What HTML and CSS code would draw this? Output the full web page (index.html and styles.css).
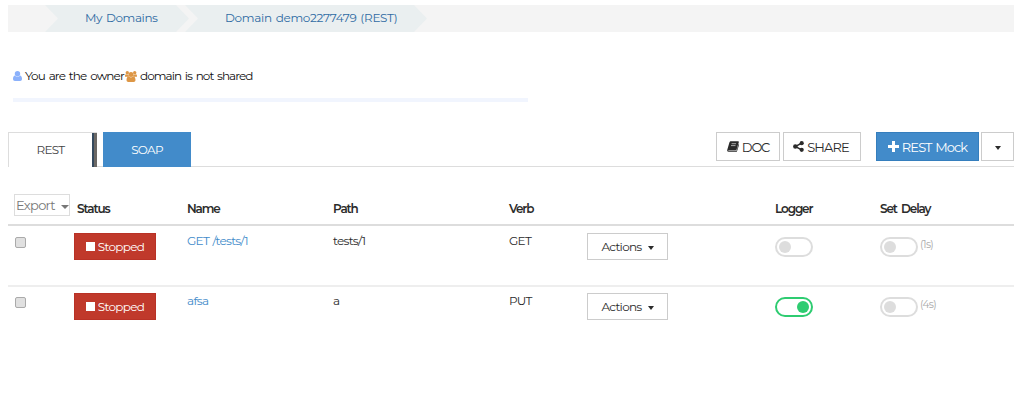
FILE: index.html
```html
<!DOCTYPE html>
<html lang="en">
<head>
  <meta charset="UTF-8">
  <title>Domain demo2277479 (REST)</title>
  <link rel="stylesheet" href="styles.css">
</head>
<body>
  <nav class="breadcrumb">
    <a class="crumb crumb-home">My Domains</a>
    <a class="crumb crumb-current">Domain demo2277479 (REST)</a>
  </nav>

  <p class="owner">
    <svg class="icon-user" viewBox="0 0 9 10"><circle cx="4.5" cy="2.7" r="2.7"/><path d="M1.800 4.600C.6 4.800 0 6.300 0 8c0 1.200.8 2 1.900 2h5.200C8.200 10 9 9.200 9 8c0-1.700-.6-3.200-1.800-3.400a3.600 3.600 0 0 1-5.400 0z"/></svg>
    <span class="owner-text">You are the owner</span>
    <svg class="icon-group" viewBox="0 0 12 11"><circle cx="2.300" cy="1.700" r="1.700"/><circle cx="9.700" cy="1.700" r="1.700"/><circle cx="6" cy="3.500" r="2.500"/><path d="M.8 3.200C0 3.500 0 4.700 0 5.800h3.200L4 4zM11.200 3.200c.8.3.8 1.500.8 2.600H8.800L8 4zM3.700 5.300C2.200 5.500 1.500 7.500 1.500 9c0 1.200.7 2 1.800 2h5.400c1.100 0 1.800-.8 1.800-2 0-1.500-.7-3.500-2.200-3.700a3.300 3.300 0 0 1-4.600 0z"/></svg>
    <span>domain is not shared</span>
  </p>
  <div class="divider"></div>

  <div class="toolbar">
    <a class="tab tab-active">REST</a>
    <a class="tab tab-soap">SOAP</a>
    <div class="buttons">
      <button class="btn btn-doc">
        <svg class="icon-book" viewBox="0 0 12 11"><path d="M4 .3h7.200c.6 0 .8.4.6 1L9.600 8.500c-.2.600-.6.900-1.200.9H2c-.5 0-.8.200-.7.5.100.3.400.4.8.4h6.500c.5 0 .9-.3 1-.8l2.100-6.700c.4.300.4.700.3 1.100l-1.900 6c-.2.700-.8 1.100-1.500 1.100H2C.8 11 0 10 .2 8.900L2.400 1.600C2.700.8 3.200.3 4 .3z"/><path class="page-lines" d="M4.600 2.700h4.500M4 4.600h4.500"/></svg>
        <span>DOC</span>
      </button>
      <button class="btn btn-share">
        <svg class="icon-share" viewBox="0 0 11 11"><path class="share-lines" d="M8.700 2.200L2.300 5.500l6.400 3.300"/><circle cx="8.700" cy="2.200" r="2.100"/><circle cx="2.300" cy="5.500" r="2.200"/><circle cx="8.700" cy="8.800" r="2.100"/></svg>
        <span>SHARE</span>
      </button>
      <button class="btn btn-mock">
        <svg class="icon-plus" viewBox="0 0 11 11"><path d="M4 0h3v4h4v3H7v4H4V7H0V4h4z"/></svg>
        <span>REST Mock</span>
      </button>
      <button class="btn btn-more"><i class="caret"></i></button>
    </div>
  </div>

  <table class="services">
    <colgroup>
      <col class="col-check"><col class="col-status"><col class="col-name"><col class="col-path">
      <col class="col-verb"><col class="col-actions"><col class="col-logger"><col class="col-delay">
    </colgroup>
    <thead>
      <tr>
        <th><button class="export"><span>Export</span><i class="caret"></i></button></th>
        <th class="status-head">Status</th>
        <th>Name</th>
        <th>Path</th>
        <th>Verb</th>
        <th></th>
        <th>Logger</th>
        <th>Set Delay</th>
      </tr>
    </thead>
    <tbody>
      <tr>
        <td><span class="check"></span></td>
        <td><button class="stopped"><i class="square"></i><span>Stopped</span></button></td>
        <td><a class="link">GET /tests/1</a></td>
        <td>tests/1</td>
        <td>GET</td>
        <td><button class="btn actions"><span>Actions</span><i class="caret"></i></button></td>
        <td><span class="switch"></span></td>
        <td><div class="delay"><span class="switch"></span><span class="secs">(1s)</span></div></td>
      </tr>
      <tr>
        <td><span class="check"></span></td>
        <td><button class="stopped"><i class="square"></i><span>Stopped</span></button></td>
        <td><a class="link">afsa</a></td>
        <td>a</td>
        <td>PUT</td>
        <td><button class="btn actions"><span>Actions</span><i class="caret"></i></button></td>
        <td><span class="switch on"></span></td>
        <td><div class="delay"><span class="switch"></span><span class="secs">(4s)</span></div></td>
      </tr>
    </tbody>
  </table>
</body>
</html>
```

FILE: styles.css
```css
* {
  box-sizing: border-box;
}

body {
  margin: 0;
  padding: 5px 10px 0 8px;
  background: #fff;
  color: #2b2b2b;
  font: 12px/16px Montserrat, Inter, sans-serif;
  letter-spacing: -.7px;
  word-spacing: 1px;
}

span, a {
  white-space: nowrap;
}

svg {
  display: block;
  flex: none;
  fill: currentColor;
}

button {
  font: inherit;
  letter-spacing: inherit;
  word-spacing: inherit;
  color: inherit;
  margin: 0;
  padding: 0;
}

/* breadcrumb */
.breadcrumb {
  display: flex;
  height: 27px;
  padding-left: 37px;
  background: #f4f4f4;
  letter-spacing: -.3px;
}

.crumb {
  height: 27px;
  padding-left: 40px;
  line-height: 26px;
  background: #eaeff0;
  color: #2f6ba3;
  clip-path: polygon(0 0, calc(100% - 13px) 0, 100% 50%, calc(100% - 13px) 100%, 0 100%, 13px 50%);
}

.crumb-home {
  width: 144px;
  letter-spacing: -.4px;
}

.crumb-current {
  width: 242px;
  margin-left: -4px;
}

/* owner line */
.owner {
  display: flex;
  align-items: center;
  height: 16px;
  margin: 36px 0 0;
  padding-left: 5px;
  color: #111;
  letter-spacing: -.95px;
  word-spacing: 1.5px;
}

.icon-user {
  width: 9px;
  height: 10px;
  margin-right: 3px;
  color: #8bb1fb;
}

.icon-group {
  width: 12px;
  height: 11px;
  margin: 0 3px 0 2px;
  color: #dd9746;
}

.owner-text {
  width: 98px;
  letter-spacing: -.87px;
}

.divider {
  width: 515px;
  height: 4px;
  margin: 14px 0 0 5px;
  background: #f1f5fe;
}

/* tabs and buttons */
.toolbar {
  display: flex;
  height: 35px;
  margin-top: 30px;
  border-bottom: 1px solid #ddd;
}

.tab {
  height: 35px;
  line-height: 35px;
  text-align: center;
}

.tab-active {
  width: 89px;
  border: solid #ddd;
  border-width: 1px 0 0 1px;
  background: linear-gradient(to left, #6b6865 3px, #34495e 3px, #34495e 5px, #fff 5px);
  padding-right: 5px;
  line-height: 34px;
  color: #444;
}

.tab-soap {
  width: 88px;
  margin-left: 6px;
  background: #428bca;
  color: #fff;
}

.buttons {
  display: flex;
  margin-left: auto;
  font-size: 13px;
}

.btn {
  display: flex;
  align-items: center;
  justify-content: center;
  height: 29px;
  border: 1px solid #ccc;
  background: #fff;
}

.btn svg {
  margin-right: 3px;
}

.btn-doc {
  width: 64px;
  letter-spacing: -1.200px;
}

.btn-share {
  width: 78px;
  margin-left: 3px;
  padding-right: 2px;
  letter-spacing: -.9px;
}

.btn-mock {
  width: 103px;
  margin-left: 15px;
  border-color: #357ebd;
  background: #428bca;
  color: #fff;
  letter-spacing: -.9px;
}

.btn-more {
  width: 33px;
  margin-left: 2px;
}

.icon-book {
  width: 12px;
  height: 11px;
}

.icon-share, .icon-plus {
  width: 11px;
  height: 11px;
}

.page-lines {
  stroke: #fff;
  stroke-width: .6;
}

.share-lines {
  fill: none;
  stroke: currentColor;
  stroke-width: 1.5;
}

.caret {
  border: solid transparent;
  border-width: 4px 4px 0;
  border-top-color: currentColor;
}

.btn-more .caret {
  margin-top: 3px;
  border-width: 4px 3.500px 0;
}

/* services table */
.services {
  width: 1006px;
  margin-top: 21px;
  table-layout: fixed;
  border-collapse: separate;
  border-spacing: 0;
}

.col-check { width: 66px; }
.col-status { width: 113px; }
.col-name { width: 146px; }
.col-path { width: 176px; }
.col-verb { width: 78px; }
.col-actions { width: 188px; }
.col-logger { width: 105px; }
.col-delay { width: 134px; }

th {
  height: 38px;
  padding: 0 0 7px;
  border-bottom: 2px solid #ddd;
  text-align: left;
  vertical-align: bottom;
  font-weight: 600;
  letter-spacing: -1.100px;
  word-spacing: 2px;
}

.status-head {
  padding-left: 3px;
}

.export {
  display: flex;
  align-items: center;
  width: 56px;
  height: 22px;
  margin: 0 0 1px 6px;
  padding: 0 1px;
  border: 1px solid #ddd;
  background: #fff;
  color: #777;
  font-size: 13px;
  font-weight: 400;
  letter-spacing: -.7px;
}

.export .caret {
  margin: 3px 0 0 6px;
}

td {
  height: 59px;
  padding: 7px 0 0;
  vertical-align: top;
}

tr + tr td {
  padding-top: 6px;
  border-top: 2px solid #eee;
}

.check {
  display: block;
  width: 11px;
  height: 11px;
  margin: 4px 0 0 7px;
  border: 1px solid #aaa;
  border-radius: 2px;
  background: #e0e0e0;
}

.stopped {
  display: flex;
  align-items: center;
  justify-content: center;
  width: 82px;
  height: 27px;
  border: 1px solid #b93226;
  background: #c0392b;
  color: #fff;
}

.square {
  width: 9px;
  height: 9px;
  margin-right: 3px;
  background: #fff;
}

.link {
  color: #428bca;
}

.actions {
  width: 81px;
  height: 27px;
}

.actions .caret {
  margin: 2px 0 0 6px;
  border-width: 4px 3.500px 0;
}

.switch {
  display: block;
  width: 38px;
  height: 20px;
  margin-top: 4px;
  padding: 2px;
  border: 2px solid #ddd;
  border-radius: 10px;
}

.switch::before {
  content: "";
  display: block;
  width: 12px;
  height: 12px;
  border-radius: 50%;
  background: #ddd;
}

.switch.on {
  border-color: #2ecc71;
}

.switch.on::before {
  margin-left: auto;
  background: #2ecc71;
}

.delay {
  display: flex;
}

.secs {
  margin: 4px 0 0 2px;
  color: #aaa;
  font-size: 10.5px;
}
```
